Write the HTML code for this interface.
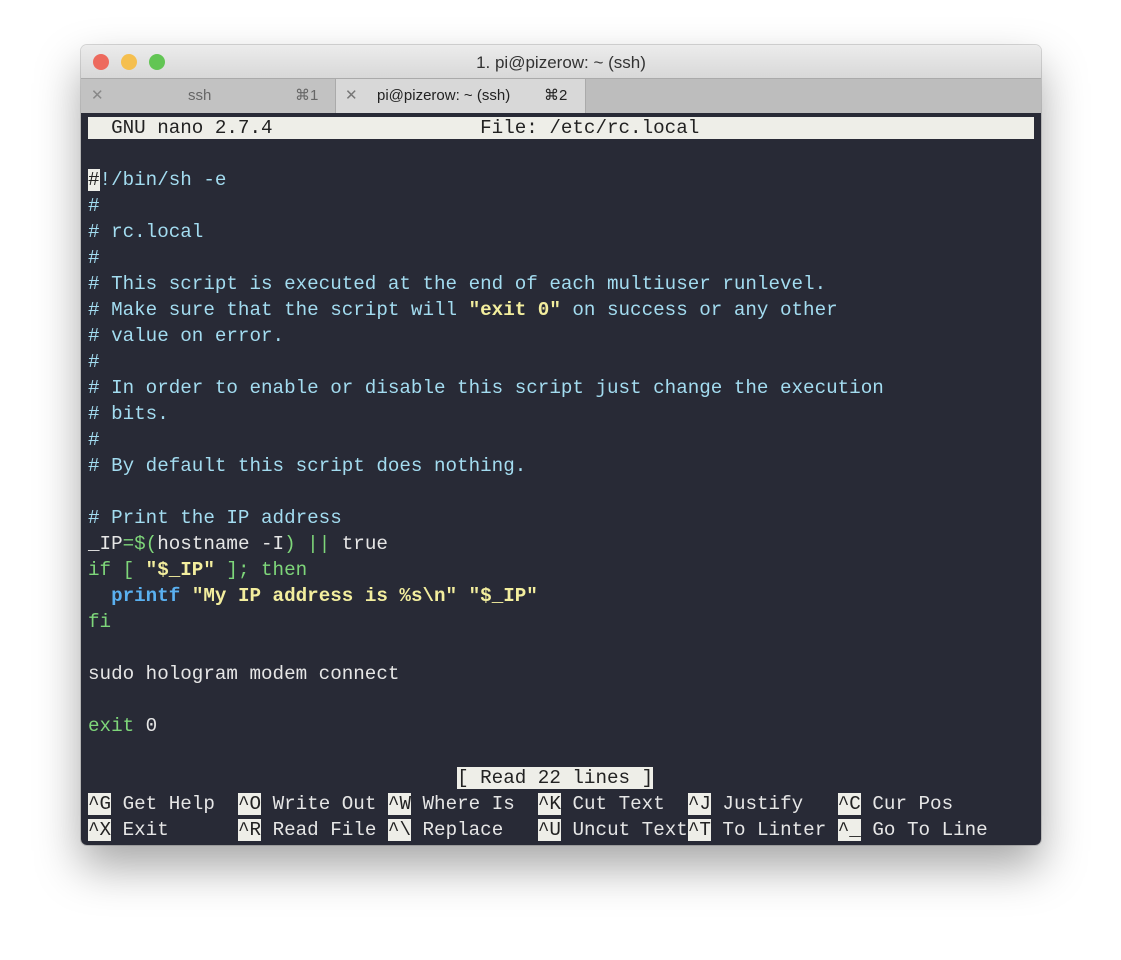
<!DOCTYPE html>
<html><head><meta charset="utf-8"><style>
body{margin:0;width:1121px;height:960px;background:#fff;position:relative;overflow:hidden;font-family:"Liberation Sans",sans-serif}
.win{position:absolute;left:81px;top:45px;width:960px;height:800px;border-radius:6px;overflow:hidden;box-shadow:0 22px 45px rgba(0,0,0,.35),0 0 0 1px rgba(0,0,0,.15)}
.title{position:absolute;left:0;top:0;width:960px;height:33px;background:linear-gradient(#ececec,#d8d8d8);text-align:center;font-size:17px;line-height:36px;color:#333}
.dot{position:absolute;top:9px;width:16px;height:16px;border-radius:50%}
.tabs{position:absolute;left:0;top:33px;width:960px;height:34px;background:#bdbdbd;border-top:1px solid #aaa;border-bottom:1px solid #999;font-size:15px;line-height:34px}
.tab{position:absolute;top:0;height:34px}
.term{position:absolute;left:0;top:68px;width:960px;height:732px;background:#282a36}
pre{margin:0;position:absolute;left:7px;font-family:"Liberation Mono",monospace;font-size:19.23px;line-height:26px;color:#e6e6e6}
.c{color:#a3dcf0}.g{color:#7ed67a}.y{color:#f3ee9e;font-weight:bold}.b{color:#5ab0f0;font-weight:bold}
.r{background:#eeeee8;color:#222}
</style></head><body>
<div class="win">
 <div class="title">1. pi@pizerow: ~ (ssh)
  <div class="dot" style="left:12px;background:#ed6a5e"></div>
  <div class="dot" style="left:40px;background:#f5bf4f"></div>
  <div class="dot" style="left:68px;background:#62c554"></div>
 </div>
 <div class="tabs">
  <div class="tab" style="left:0;width:254px;background:#c2c2c2;color:#666;border-right:1px solid #aaa"><span style="position:absolute;left:10px;color:#888">✕</span><span style="position:absolute;left:107px">ssh</span><span style="position:absolute;left:214px">⌘1</span></div>
  <div class="tab" style="left:255px;width:249px;background:#d8d8d8;color:#222;border-right:1px solid #aaa"><span style="position:absolute;left:9px;color:#777">✕</span><span style="position:absolute;left:41px">pi@pizerow: ~ (ssh)</span><span style="position:absolute;left:208px">⌘2</span></div>
 </div>
 <div class="term">
<pre style="top:2px"><span class="r">  GNU nano 2.7.4                  File: /etc/rc.local                             </span>

<span class="r">#</span><span class="c">!/bin/sh -e</span>
<span class="c">#</span>
<span class="c"># rc.local</span>
<span class="c">#</span>
<span class="c"># This script is executed at the end of each multiuser runlevel.</span>
<span class="c"># Make sure that the script will </span><span class="y">"exit 0"</span><span class="c"> on success or any other</span>
<span class="c"># value on error.</span>
<span class="c">#</span>
<span class="c"># In order to enable or disable this script just change the execution</span>
<span class="c"># bits.</span>
<span class="c">#</span>
<span class="c"># By default this script does nothing.</span>

<span class="c"># Print the IP address</span>
_IP<span class="g">=$(</span>hostname -I<span class="g">) ||</span> true
<span class="g">if [ </span><span class="y">"$_IP"</span><span class="g"> ]; then</span>
  <span class="b">printf</span> <span class="y">"My IP address is %s\n" "$_IP"</span>
<span class="g">fi</span>

sudo hologram modem connect

<span class="g">exit</span> 0

                                <span class="r">[ Read 22 lines ]</span>
<span class="r">^G</span> Get Help  <span class="r">^O</span> Write Out <span class="r">^W</span> Where Is  <span class="r">^K</span> Cut Text  <span class="r">^J</span> Justify   <span class="r">^C</span> Cur Pos
<span class="r">^X</span> Exit      <span class="r">^R</span> Read File <span class="r">^\</span> Replace   <span class="r">^U</span> Uncut Text<span class="r">^T</span> To Linter <span class="r">^_</span> Go To Line</pre>
 </div>
</div>
</body></html>
